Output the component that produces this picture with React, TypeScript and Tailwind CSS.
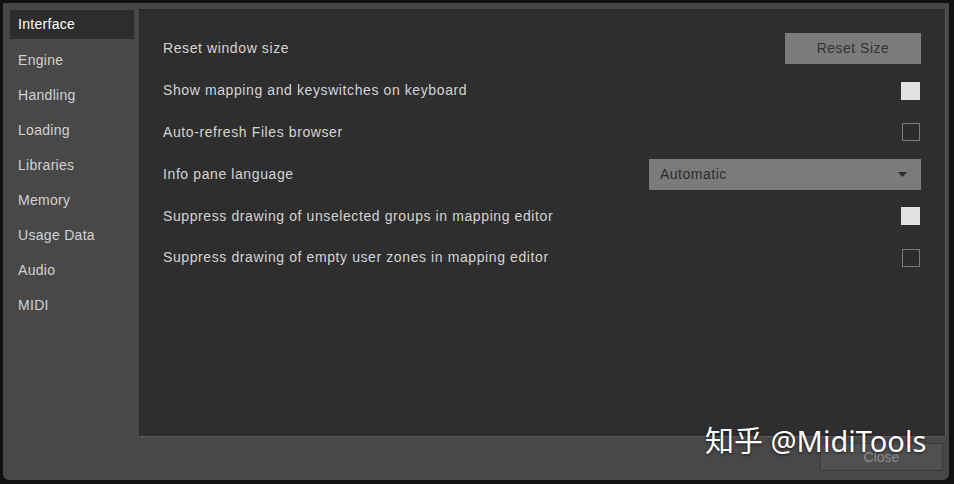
const menu = ['Interface', 'Engine', 'Handling', 'Loading', 'Libraries', 'Memory', 'Usage Data', 'Audio', 'MIDI'];

type Row = { label: string; kind: 'button' | 'on' | 'off' | 'select' };

const rows: Row[] = [
  { label: 'Reset window size', kind: 'button' },
  { label: 'Show mapping and keyswitches on keyboard', kind: 'on' },
  { label: 'Auto-refresh Files browser', kind: 'off' },
  { label: 'Info pane language', kind: 'select' },
  { label: 'Suppress drawing of unselected groups in mapping editor', kind: 'on' },
  { label: 'Suppress drawing of empty user zones in mapping editor', kind: 'off' },
];

function Control({ kind }: { kind: Row['kind'] }) {
  if (kind === 'button')
    return (
      <button className="w-[136px] h-[31px] bg-[#7b7b7b] text-[#333] text-[14px] tracking-[0.5px]">Reset Size</button>
    );
  if (kind === 'on') return <div className="w-[19px] h-[18px] mr-[1px] bg-[#e2e2e2]" />;
  if (kind === 'off') return <div className="w-[18px] h-[18px] mr-[1px] border-[1.5px] border-[#7a7a7a] bg-[#2c2c2c]" />;
  return (
    <div className="w-[272px] h-[31px] bg-[#7b7b7b] flex items-center justify-between pl-[11px] pr-[14px] text-[#2c2c2c] text-[14px] tracking-[0.5px]">
      <span>Automatic</span>
      <svg width="9" height="5" viewBox="0 0 9 5"><path d="M0 0h9L4.5 5z" fill="#2c2c2c" /></svg>
    </div>
  );
}

export default function App() {
  return (
    <div className="w-[954px] h-[484px] bg-[#111] pt-[3px] pl-[3px] relative overflow-hidden" style={{ fontFamily: '"Liberation Sans", Arial, sans-serif' }}>
      <div className="w-[946px] h-[477px] bg-[#484848] rounded-b-[6px] pl-[7px] pt-[6px] pr-[3px] flex flex-col">
        <div className="flex gap-[5px]">
          <div className="w-[124px] mt-[1px] flex flex-col">
            {menu.map((m, i) =>
              i === 0 ? (
                <div key={m} className="h-[29px] mb-[4px] flex items-center pl-[8px] text-[14px] tracking-[0.3px] bg-[#2d2d2d] text-white">
                  {m}
                </div>
              ) : (
                <div key={m} className="h-[35px] flex items-center pl-[8px] text-[14px] tracking-[0.3px] text-[#d2d2d2]">
                  {m}
                </div>
              )
            )}
          </div>
          <div className="flex-1 h-[428px] bg-[#2e2e2e] border border-t-[#262626] border-l-[#262626] border-r-[#5a5a5a] border-b-[#5a5a5a] pt-[18px] pl-[23px] pr-[24px]">
            {rows.map((r) => (
              <div key={r.label} className="h-[41.8px] flex items-center justify-between text-[14px] tracking-[0.6px] text-[#d4d4d4]">
                <span>{r.label}</span>
                <Control kind={r.kind} />
              </div>
            ))}
          </div>
        </div>
        <div className="flex justify-end mt-[6px] pr-[3px]">
          <button className="w-[123px] h-[28px] bg-[#505050] border border-[#3a3a3a] text-[#8c8c8c] text-[14px]">Close</button>
        </div>
      </div>
      <div
        className="absolute left-[705px] top-[421px] text-white text-[29px] leading-[40px] [text-shadow:0_1px_3px_rgba(0,0,0,0.7)]"
        style={{ fontFamily: '"Noto Sans", "Noto Sans CJK SC", sans-serif' }}
      >
        知乎 @MidiTools
      </div>
    </div>
  );
}
